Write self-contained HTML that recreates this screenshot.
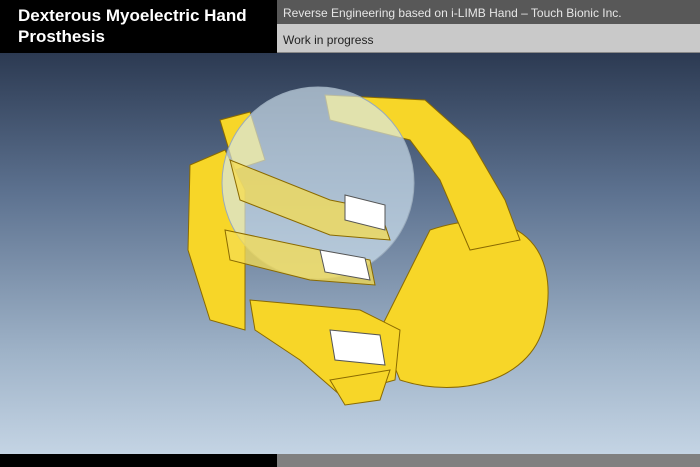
<!DOCTYPE html>
<html><head><style>
html,body{margin:0;padding:0;width:700px;height:467px;overflow:hidden;font-family:"Liberation Sans",sans-serif}
.bg{position:absolute;left:0;top:53px;width:700px;height:401px;background:linear-gradient(#2c3a52 0%,#5d7290 35%,#9fb3c8 75%,#c4d4e4 100%)}
.t{position:absolute;left:0;top:0;width:277px;height:53px;background:#000;color:#fff;font-weight:bold;font-size:17px;line-height:21px;padding:5px 0 0 18px;box-sizing:border-box}
.r1{position:absolute;left:277px;top:0;width:423px;height:24px;background:#585858;color:#e6e6e6;font-size:12px;line-height:26px;padding-left:6px;box-sizing:border-box}
.r2{position:absolute;left:277px;top:24px;width:423px;height:29px;background:#c9c9c9;color:#222;font-size:12px;line-height:32px;padding-left:6px;box-sizing:border-box;border-bottom:1px solid #888}
.b1{position:absolute;left:0;top:454px;width:277px;height:13px;background:#000}
.b2{position:absolute;left:277px;top:454px;width:423px;height:13px;background:#808080}
svg{position:absolute;left:0;top:0}
</style></head><body>
<div class="bg"></div>
<svg width="700" height="467">
<g stroke="#8a6a00" stroke-width="1" fill="#f7d628">
<path d="M430 230 C520 200 560 250 545 320 C535 380 460 400 400 380 L380 330 Z"/>
<path d="M325 95 L425 100 L470 140 L505 200 L520 240 L470 250 L440 180 L410 140 L330 120 Z"/>
<path d="M250 300 L360 310 L400 330 L395 380 L340 395 L300 360 L255 330 Z"/>
<path d="M190 165 L225 150 L245 190 L245 330 L210 320 L188 250 Z"/>
<path d="M220 120 L250 112 L265 160 L235 170 Z"/>
<path d="M330 380 L390 370 L380 400 L345 405 Z"/>
</g>
<circle cx="318" cy="183" r="96" fill="#d6e8f5" fill-opacity="0.65" stroke="#9ab" stroke-width="1"/>
<g stroke="#8a6a00" stroke-width="1" fill="#f5dc50" fill-opacity="0.75">
<path d="M230 160 L330 200 L380 210 L390 240 L330 235 L240 200 Z"/>
<path d="M225 230 L320 250 L370 260 L375 285 L310 280 L230 260 Z"/>
</g>
<g fill="#fff" stroke="#555"><path d="M330 330 L380 335 L385 365 L335 360 Z"/><path d="M345 195 L385 205 L385 230 L345 220 Z"/><path d="M320 250 L365 258 L370 280 L325 272 Z"/></g>
</svg>
<div class="t">Dexterous Myoelectric Hand<br>Prosthesis</div>
<div class="r1">Reverse Engineering based on i-LIMB Hand – Touch Bionic Inc.</div>
<div class="r2">Work in progress</div>
<div class="b1"></div><div class="b2"></div>
</body></html>
